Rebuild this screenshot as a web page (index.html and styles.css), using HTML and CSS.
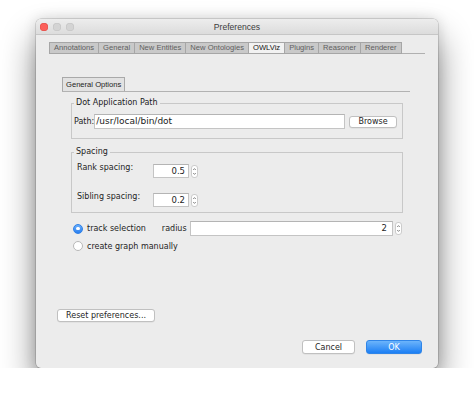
FILE: index.html
```html
<!DOCTYPE html>
<html>
<head>
<meta charset="utf-8">
<title>Preferences</title>
<link rel="stylesheet" href="styles.css">
</head>
<body>
<div class="window">
  <div class="titlebar">
    <div class="lights"><span class="light red"></span><span class="light"></span><span class="light"></span></div>
    <div class="title">Preferences</div>
    <div></div>
  </div>
  <div class="tabs">
    <span class="tab">Annotations</span>
    <span class="tab">General</span>
    <span class="tab">New Entities</span>
    <span class="tab">New Ontologies</span>
    <span class="tab active">OWLViz</span>
    <span class="tab">Plugins</span>
    <span class="tab">Reasoner</span>
    <span class="tab">Renderer</span>
    <span class="tab-fill"></span>
  </div>
  <div class="subtabs"><span class="subtab">General Options</span></div>
  <fieldset class="group dot">
    <legend>Dot Application Path</legend>
    <div class="path-row">
      <span class="path-label">Path:</span>
      <div class="field path-field">/usr/local/bin/dot</div>
      <div class="button browse">Browse</div>
    </div>
  </fieldset>
  <fieldset class="group spacing">
    <legend>Spacing</legend>
    <div class="spin-row">
      <span class="spin-label">Rank spacing:</span>
      <div class="field num">0.5</div>
      <svg class="stepper" width="7" height="13" viewBox="0 0 7 13"><rect x="0.5" y="0.5" width="6" height="12" rx="2.5" fill="#fff" stroke="#c2c2c2" stroke-width="0.8"/><path d="M2.2 5 L3.5 3.6 L4.8 5 M2.2 8 L3.5 9.4 L4.8 8" fill="none" stroke="#555" stroke-width="0.7"/></svg>
    </div>
    <div class="spin-row second">
      <span class="spin-label">Sibling spacing:</span>
      <div class="field num">0.2</div>
      <svg class="stepper" width="7" height="13" viewBox="0 0 7 13"><rect x="0.5" y="0.5" width="6" height="12" rx="2.5" fill="#fff" stroke="#c2c2c2" stroke-width="0.8"/><path d="M2.2 5 L3.5 3.6 L4.8 5 M2.2 8 L3.5 9.4 L4.8 8" fill="none" stroke="#555" stroke-width="0.7"/></svg>
    </div>
  </fieldset>
  <div class="radios">
    <div class="radio-row">
      <span class="radio on"></span>
      <span class="radio-text">track selection</span>
      <span class="radius-label">radius</span>
      <div class="field radius-field">2</div>
      <svg class="stepper radius-stepper" width="7" height="13" viewBox="0 0 7 13"><rect x="0.5" y="0.5" width="6" height="12" rx="2.5" fill="#fff" stroke="#c2c2c2" stroke-width="0.8"/><path d="M2.2 5 L3.5 3.6 L4.8 5 M2.2 8 L3.5 9.4 L4.8 8" fill="none" stroke="#555" stroke-width="0.7"/></svg>
    </div>
    <div class="radio-row second">
      <span class="radio"></span>
      <span class="radio-text">create graph manually</span>
    </div>
  </div>
  <div class="reset-row"><div class="button reset">Reset preferences...</div></div>
  <div class="footer">
    <div class="button cancel">Cancel</div>
    <div class="button ok">OK</div>
  </div>
</div>
</body>
</html>
```
FILE: styles.css
```css
html, body {
  margin: 0;
  background: #ffffff;
}
body {
  font-family: "DejaVu Sans", sans-serif;
  font-size: 8px;
  color: #1e1e1e;
}
.window {
  margin: 19px 0 0 36px;
  width: 402px;
  height: 349px;
  background: #ececec;
  border-radius: 5px;
  box-shadow: 0 0 0 0.5px rgba(0,0,0,0.24), 0 20px 34px rgba(0,0,0,0.48), 0 0 14px rgba(0,0,0,0.14);
  display: flex;
  flex-direction: column;
}
.titlebar {
  height: 15px;
  border-bottom: 1px solid #c6c6c6;
  background: linear-gradient(#ededed, #dcdcdc);
  border-radius: 5px 5px 0 0;
  display: grid;
  grid-template-columns: 1fr auto 1fr;
  align-items: center;
}
.lights {
  display: flex;
  gap: 5px;
  padding-left: 4px;
}
.light {
  width: 8px;
  height: 8px;
  border-radius: 50%;
  background: #d4d4d4;
  box-shadow: inset 0 0 0 0.5px #c2c2c2;
}
.light.red {
  background: #fc5f59;
  box-shadow: inset 0 0 0 0.5px #de4a44;
}
.title {
  font-family: "Liberation Sans", sans-serif;
  font-size: 8.6px;
  color: #3c3c3c;
}
.tabs {
  display: flex;
  margin: 7px 13px 0;
  height: 12px;
}
.tab {
  height: 10px;
  line-height: 10px;
  border: 1px solid #a6a6a6;
  border-left: none;
  background: #c9c9c9;
  color: #5f5f5f;
  font-family: "Liberation Sans", sans-serif;
  font-size: 7.6px;
  padding: 0 4px;
  white-space: nowrap;
}
.tab:first-child {
  border-left: 1px solid #a6a6a6;
}
.tab.active {
  background: #f2f2f2;
  color: #151515;
}
.tab-fill {
  flex: 1;
  border-bottom: 1px solid #b0b0b0;
}
.subtabs {
  display: flex;
  margin: 23px 28px 0 26px;
  border-bottom: 1px solid #b2b2b2;
}
.subtab {
  box-sizing: border-box;
  height: 14px;
  line-height: 13px;
  padding: 0 3px;
  border: 1px solid #a9a9a9;
  border-bottom: none;
  background: #e2e2e2;
  font-family: "Liberation Sans", sans-serif;
  font-size: 7.6px;
  color: #222;
}
.group {
  margin: 6px 35px 0;
  padding: 6px 5px 9px 2px;
  border: 1px solid #c8c8c8;
  min-width: 0;
}
.group legend {
  padding: 0 2px;
  line-height: 10px;
  font-size: 8px;
  color: #222;
}
.spacing {
  margin-top: 8px;
  padding-top: 4px;
  padding-bottom: 5px;
}
.path-row {
  display: flex;
  align-items: center;
  height: 15px;
}
.path-label {
  white-space: nowrap;
}
.field {
  box-sizing: border-box;
  background: #ffffff;
  border: 1px solid #c4c4c4;
  border-top-color: #b4b4b4;
}
.path-field {
  flex: 1;
  height: 15px;
  line-height: 13px;
  font-size: 9px;
  padding-left: 1px;
  color: #1a1a1a;
}
.button {
  box-sizing: border-box;
  display: flex;
  align-items: center;
  justify-content: center;
  background: #ffffff;
  border: 1px solid #c0c0c0;
  border-radius: 3px;
  box-shadow: 0 0.5px 0.5px rgba(0,0,0,0.08);
  font-size: 8px;
  color: #1e1e1e;
  white-space: nowrap;
}
.browse {
  margin-left: 4px;
  width: 48px;
  height: 12px;
}
.spin-row {
  display: flex;
  align-items: flex-start;
  margin-left: 3px;
}
.spin-row.second {
  margin-top: 12px;
}
.spin-label {
  width: 76px;
  line-height: 10px;
  margin-top: 2px;
}
.num {
  margin-top: 3px;
  width: 36px;
  height: 14px;
  line-height: 12px;
  text-align: right;
  padding-right: 3px;
  font-size: 8.5px;
}
.stepper {
  display: block;
  margin-left: 2px;
  margin-top: 3.5px;
}
.radios {
  margin-top: 8px;
  padding: 0 36px 0 37px;
}
.radio-row {
  display: flex;
  align-items: center;
  height: 15px;
}
.radio-row.second {
  margin-top: 5px;
  height: 10px;
}
.radio {
  box-sizing: border-box;
  width: 10px;
  height: 10px;
  border-radius: 50%;
  background: #ffffff;
  border: 1px solid #b8b8b8;
  display: flex;
  align-items: center;
  justify-content: center;
}
.radio.on {
  background: linear-gradient(#6aaffb, #2a7ff0);
  border-color: #2f80e6;
}
.radio.on::after {
  content: "";
  width: 3.5px;
  height: 3.5px;
  border-radius: 50%;
  background: #ffffff;
}
.radio-text {
  margin-left: 4px;
}
.radius-label {
  margin-left: 16px;
}
.radius-field {
  flex: 1;
  margin-left: 3px;
  height: 15px;
  line-height: 13px;
  text-align: right;
  padding-right: 5px;
  font-size: 8.5px;
}
.radius-stepper {
  margin: 0 0 0 2px;
}
.reset-row {
  margin-top: auto;
  padding-left: 21px;
  display: flex;
}
.reset {
  width: 98px;
  height: 13px;
}
.footer {
  margin-top: 18px;
  padding: 0 16px 14px 0;
  display: flex;
  justify-content: flex-end;
  gap: 11px;
}
.cancel {
  width: 53px;
  height: 14px;
}
.ok {
  width: 56px;
  height: 14px;
  background: linear-gradient(#6cb4fb, #1c7ff4);
  border-color: #2f85e8;
  color: #ffffff;
}
```
